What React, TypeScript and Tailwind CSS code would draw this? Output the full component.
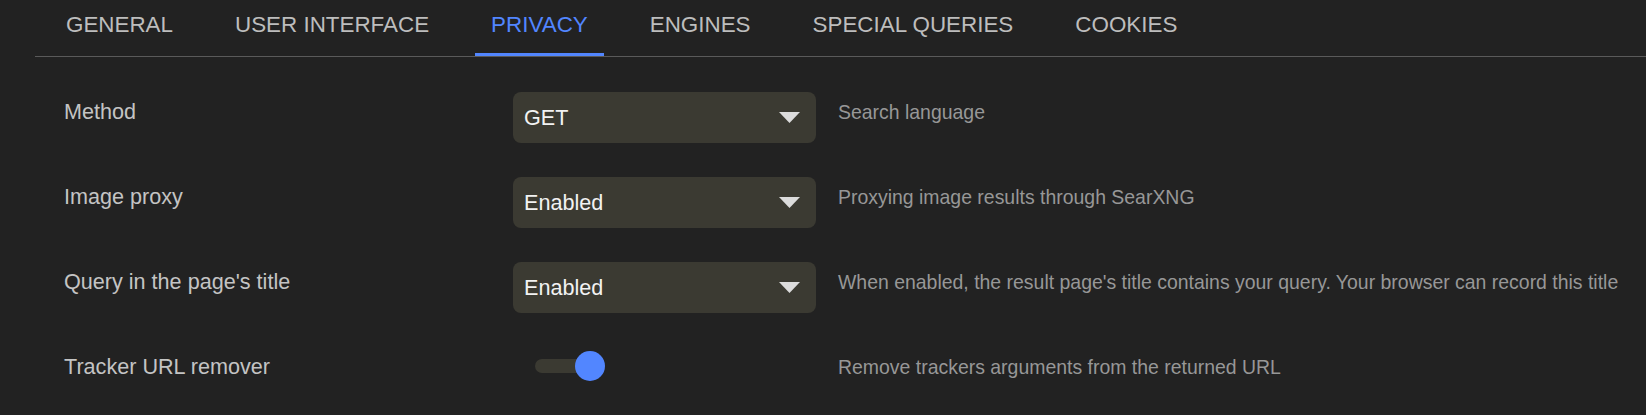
import React from "react";

const tabs = ["GENERAL", "USER INTERFACE", "PRIVACY", "ENGINES", "SPECIAL QUERIES", "COOKIES"];

function Caret() {
  return (
    <svg width="21" height="11" viewBox="0 0 21 11" className="absolute right-[16px] top-[20px]">
      <polygon points="0,0 21,0 10.5,11" fill="#dcdcdc" />
    </svg>
  );
}

function Select({ value }: { value: string }) {
  return (
    <div className="relative w-[303px] h-[51px] shrink-0 rounded-[8px] bg-[#3b3a32] flex items-center pl-[11px] text-[21.6px] leading-[24px] text-[#f2f2f2]">
      {value}
      <Caret />
    </div>
  );
}

function Label({ children }: { children: React.ReactNode }) {
  return (
    <div className="w-[449px] shrink-0 pt-[8px] text-[21.6px] leading-[24px] text-[#c4c4c4]">{children}</div>
  );
}

function Desc({ children }: { children: React.ReactNode }) {
  return (
    <div className="ml-[22px] pt-[8px] text-[19.44px] leading-[24px] text-[#979797] whitespace-nowrap">{children}</div>
  );
}

export default function App() {
  return (
    <div className="w-full h-[415px] bg-[#222222] overflow-hidden font-['Liberation_Sans',Arial,sans-serif]">
      <div className="ml-[35px] border-b border-[#5a5a5a] flex gap-[30px] pl-[15px]">
        {tabs.map((t) => (
          <div
            key={t}
            className={
              t === "PRIVACY"
                ? "h-[56px] px-4 pt-[13px] text-[22.4px] leading-[24px] border-b-[3px] border-[#5286ff] text-[#5286ff]"
                : "h-[56px] px-4 pt-[13px] text-[22.4px] leading-[24px] border-b-[3px] border-transparent text-[#bdbdbd]"
            }
          >
            {t}
          </div>
        ))}
      </div>
      <div className="pl-[64px] pt-[35px] flex flex-col gap-[34px]">
        <div className="flex items-start">
          <Label>Method</Label>
          <Select value="GET" />
          <Desc>Search language</Desc>
        </div>
        <div className="flex items-start">
          <Label>Image proxy</Label>
          <Select value="Enabled" />
          <Desc>Proxying image results through SearXNG</Desc>
        </div>
        <div className="flex items-start">
          <Label>Query in the page's title</Label>
          <Select value="Enabled" />
          <Desc>When enabled, the result page's title contains your query. Your browser can record this title</Desc>
        </div>
        <div className="flex items-start">
          <Label>Tracker URL remover</Label>
          <div className="w-[303px] shrink-0 pl-[22px] pt-[4px]">
            <div className="relative w-[70px] h-[30px]">
              <div className="absolute left-0 top-[8px] w-[60px] h-[14px] rounded-full bg-[#3b3a32]" />
              <div className="absolute left-[40px] top-0 w-[30px] h-[30px] rounded-full bg-[#5286ff]" />
            </div>
          </div>
          <Desc>Remove trackers arguments from the returned URL</Desc>
        </div>
      </div>
    </div>
  );
}
